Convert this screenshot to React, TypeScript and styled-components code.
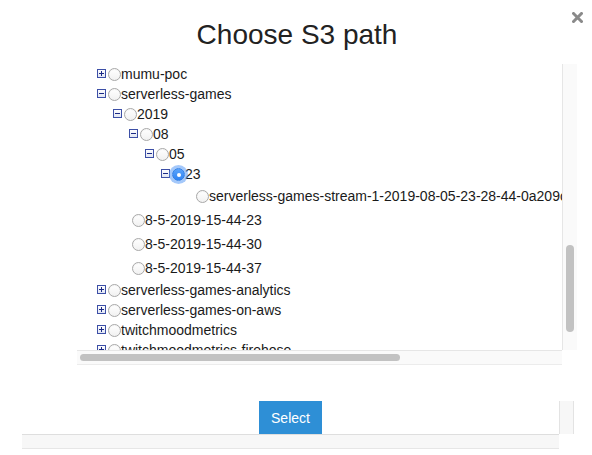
import React from 'react';
import styled, { createGlobalStyle } from 'styled-components';

const Global = createGlobalStyle`
  html, body { margin: 0; padding: 0; background: #fff; }
  body { font-family: "Liberation Sans", Arial, Helvetica, sans-serif; }
  * { box-sizing: border-box; }
`;

const Modal = styled.div`
  position: relative;
  width: 592px;
  height: 455px;
  overflow: hidden;
  background: #fff;
  display: flex;
  flex-direction: column;
`;

const Close = styled.button`
  position: absolute;
  top: 12px;
  right: 9px;
  width: 11px;
  height: 11px;
  padding: 0;
  border: 0;
  background: none;
  display: flex;
  cursor: pointer;
`;

const Title = styled.h1`
  margin: 0;
  padding: 21px 0 0 2px;
  font-size: 28px;
  line-height: 28px;
  font-weight: normal;
  text-align: center;
  color: #222;
`;

const Panel = styled.div`
  margin: 15px 0 0 77px;
  width: 500px;
  height: 301px;
  display: grid;
  grid-template-columns: 485px 15px;
  grid-template-rows: 286px 15px;
`;

const Viewport = styled.div`
  overflow: hidden;
`;

const Tree = styled.ul`
  list-style: none;
  margin: 0;
  padding: 0 0 0 20px;
`;

const Row = styled.li<{ $level: number; $leaf: boolean }>`
  display: flex;
  align-items: center;
  height: ${(p) => (p.$leaf ? 24 : 20)}px;
  padding-left: ${(p) => p.$level * 16 + (p.$leaf ? 19 : 0)}px;
  white-space: nowrap;
  font-size: 14px;
  line-height: 20px;
  color: #1a1a1a;
`;

const Expander = styled.span`
  display: flex;
  flex: none;
  width: 9px;
  height: 9px;
  margin: 0 2px 2px 0;
`;

const Radio = styled.span<{ $checked?: boolean }>`
  position: relative;
  flex: none;
  width: 13px;
  height: 13px;
  margin-top: 1px;
  border-radius: 50%;
  border: 1px solid ${(p) => (p.$checked ? '#2f7ee6' : '#a8a8a8')};
  background: ${(p) =>
    p.$checked
      ? 'linear-gradient(#5aa4fb, #2f83f2)'
      : 'linear-gradient(#ffffff, #f1f1f1)'};
  box-shadow: ${(p) =>
    p.$checked ? '0 0 0 3px rgba(90, 155, 245, 0.55)' : 'inset 0 1px 1px rgba(0,0,0,0.04)'};
  &::after {
    content: '';
    display: ${(p) => (p.$checked ? 'block' : 'none')};
    position: absolute;
    left: 50%;
    top: 50%;
    width: 4px;
    height: 4px;
    margin: -2px 0 0 -2px;
    border-radius: 50%;
    background: #fff;
  }
`;

const Label = styled.span`
  padding-left: 0;
`;

const VTrack = styled.div`
  background: #fafafa;
  border-left: 1px solid #e6e6e6;
  padding: 181px 0 0 3px;
`;

const VThumb = styled.div`
  width: 8px;
  height: 87px;
  border-radius: 4px;
  background: #c2c2c2;
`;

const HTrack = styled.div`
  background: #fafafa;
  border-top: 1px solid #e6e6e6;
  border-bottom: 1px solid #ececec;
  padding: 3px 0 0 3px;
`;

const HThumb = styled.div`
  width: 320px;
  height: 7px;
  border-radius: 4px;
  background: #c2c2c2;
`;

const Corner = styled.div`
  background: #fff;
`;

const Footer = styled.div`
  margin: 36px 0 0 22px;
  width: 552px;
  display: grid;
  grid-template-columns: 537px 15px;
  grid-template-rows: 33px 15px;
`;

const ButtonCell = styled.div`
  display: flex;
  justify-content: center;
`;

const SelectButton = styled.button`
  height: 33px;
  padding: 0 12px;
  border: 0;
  border-radius: 0;
  background: #2e8fd6;
  color: #fff;
  font-family: "Liberation Sans", Arial, sans-serif;
  font-size: 14px;
  cursor: pointer;
`;

const FootV = styled.div`
  background: #f7f7f7;
  border-left: 1px solid #e3e3e3;
  border-right: 1px solid #e3e3e3;
`;

const FootH = styled.div`
  background: #f7f7f7;
  border-top: 1px solid #dedede;
  border-bottom: 1px solid #e6e6e6;
`;

type Node = {
  level: number;
  label: string;
  kind: 'open' | 'closed' | 'leaf';
  checked?: boolean;
};

const nodes: Node[] = [
  { level: 0, label: 'mumu-poc', kind: 'closed' },
  { level: 0, label: 'serverless-games', kind: 'open' },
  { level: 1, label: '2019', kind: 'open' },
  { level: 2, label: '08', kind: 'open' },
  { level: 3, label: '05', kind: 'open' },
  { level: 4, label: '23', kind: 'open', checked: true },
  {
    level: 5,
    label: 'serverless-games-stream-1-2019-08-05-23-28-44-0a209c4e-7b1f-4d2a-9c85-1f6e2b4d7a90',
    kind: 'leaf',
  },
  { level: 1, label: '8-5-2019-15-44-23', kind: 'leaf' },
  { level: 1, label: '8-5-2019-15-44-30', kind: 'leaf' },
  { level: 1, label: '8-5-2019-15-44-37', kind: 'leaf' },
  { level: 0, label: 'serverless-games-analytics', kind: 'closed' },
  { level: 0, label: 'serverless-games-on-aws', kind: 'closed' },
  { level: 0, label: 'twitchmoodmetrics', kind: 'closed' },
  { level: 0, label: 'twitchmoodmetrics-firehose', kind: 'closed' },
  { level: 0, label: 'twitchmoodmetrics-output', kind: 'closed' },
];

function ToggleIcon({ open }: { open: boolean }) {
  return (
    <svg width="9" height="9" viewBox="0 0 9 9" shapeRendering="crispEdges">
      <defs>
        <linearGradient id="tg" x1="0" y1="0" x2="0" y2="1">
          <stop offset="0" stopColor="#ffffff" />
          <stop offset="1" stopColor="#dfe4f2" />
        </linearGradient>
      </defs>
      <rect x="0.5" y="0.5" width="8" height="8" rx="1" fill="url(#tg)" stroke="#3c4fa6" />
      <path d="M2 4.5h5" stroke="#1b2a86" />
      {!open && <path d="M4.5 2v5" stroke="#1b2a86" />}
    </svg>
  );
}

function CloseIcon() {
  return (
    <svg width="11" height="11" viewBox="0 0 11 11">
      <path d="M1.5 1.5l8 8M9.5 1.5l-8 8" stroke="#8a8a8a" strokeWidth="3" strokeLinecap="square" />
    </svg>
  );
}

export default function App() {
  return (
    <>
      <Global />
      <Modal>
        <Close aria-label="Close">
          <CloseIcon />
        </Close>
        <Title>Choose S3 path</Title>
        <Panel>
          <Viewport>
            <Tree>
              {nodes.map((n, i) => (
                <Row key={i} $level={n.level} $leaf={n.kind === 'leaf'}>
                  {n.kind !== 'leaf' && (
                    <Expander>
                      <ToggleIcon open={n.kind === 'open'} />
                    </Expander>
                  )}
                  <Radio $checked={n.checked} />
                  <Label>{n.label}</Label>
                </Row>
              ))}
            </Tree>
          </Viewport>
          <VTrack>
            <VThumb />
          </VTrack>
          <HTrack>
            <HThumb />
          </HTrack>
          <Corner />
        </Panel>
        <Footer>
          <ButtonCell>
            <SelectButton>Select</SelectButton>
          </ButtonCell>
          <FootV />
          <FootH />
          <Corner />
        </Footer>
      </Modal>
    </>
  );
}
